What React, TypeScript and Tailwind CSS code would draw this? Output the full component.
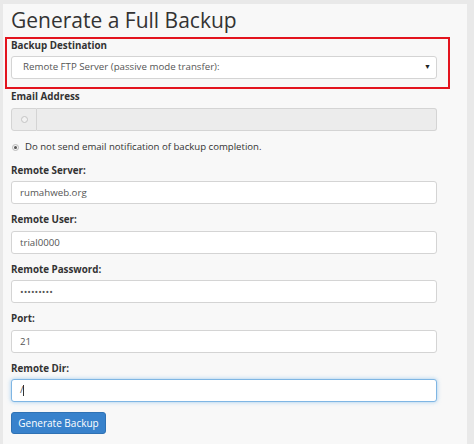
import React from 'react';

const fields = [
  { label: 'Remote Server:', value: 'rumahweb.org' },
  { label: 'Remote User:', value: 'trial0000' },
  { label: 'Remote Password:', value: '•••••••••' },
  { label: 'Port:', value: '21' },
];

const App: React.FC = () => {
  return (
    <div className="w-[474px] h-[444px] overflow-hidden bg-[#e9e9e9] pt-[4px] pl-[3px] font-['Open_Sans',sans-serif] text-[#333]">
      <div className="h-full w-[464px] bg-[#f8f8f8] pl-[8px]">
        <h1 className="pt-[5px] text-[21px] leading-[23px] font-normal text-[#333]">Generate a Full Backup</h1>

        {/* Destination */}
        <div className="mt-[5px] -ml-[6px] w-[445px] border-2 border-[#e3141e] px-[4px] pb-[8px]">
          <label className="block text-[9.8px] leading-[14px] font-bold">Backup Destination</label>
          <div className="mt-[3px] h-[23px] w-[426px] rounded-[3px] border border-[#d4d4d4] bg-white flex items-center justify-between pl-[11px] pr-[5px] text-[9.7px] text-[#555]">
            <span>Remote FTP Server (passive mode transfer):</span>
            <span className="text-[7px] text-[#222]">▼</span>
          </div>
        </div>

        {/* Email */}
        <label className="block mt-[1px] text-[9.8px] leading-[14px] font-bold">Email Address</label>
        <div className="mt-[4px] flex h-[22.5px] w-[426px]">
          <div className="w-[26px] h-full rounded-l-[3px] border border-[#d4d4d4] bg-[#ececec] flex items-center justify-center">
            <span className="w-[7px] h-[7px] rounded-full border border-[#c4c4c4] bg-[#f2f2f2]" />
          </div>
          <div className="flex-1 h-full rounded-r-[3px] border border-l-0 border-[#d4d4d4] bg-[#ececec]" />
        </div>
        <div className="mt-[10px] flex items-center h-[14px] text-[9.6px] text-[#333]">
          <span className="ml-[1px] w-[7px] h-[7px] rounded-full border border-[#bbb] bg-[#f4f4f4] flex items-center justify-center">
            <span className="w-[3px] h-[3px] rounded-full bg-[#555]" />
          </span>
          <span className="ml-[6px]">Do not send email notification of backup completion.</span>
        </div>

        {/* Remote fields */}
        <div className="mt-[9px] flex flex-col gap-[9px]">
          {fields.map((f) => (
            <div key={f.label}>
              <label className="block text-[9.8px] leading-[14px] font-bold">{f.label}</label>
              <input
                readOnly
                value={f.value}
                className="mt-[3.5px] block h-[23px] w-[426px] rounded-[3px] border border-[#d4d4d4] bg-white px-[8px] text-[9.7px] text-[#555] outline-none"
              />
            </div>
          ))}
          <div>
            <label className="block text-[9.8px] leading-[14px] font-bold">Remote Dir:</label>
            <div className="mt-[3.5px] h-[23px] w-[426px] rounded-[3px] border border-[#7fb6e4] bg-white px-[8px] flex items-center text-[9.7px] text-[#555] shadow-[0_0_4px_rgba(102,175,233,0.6)]">
              <span>/</span>
              <span className="ml-[-1px] w-px h-[11px] bg-[#333]" />
            </div>
          </div>
        </div>

        <button className="mt-[10px] h-[22px] w-[95px] rounded-[3px] border border-[#2f72b4] bg-[#3882cc] text-[10px] text-white">
          Generate Backup
        </button>
      </div>
    </div>
  );
};

export default App;
